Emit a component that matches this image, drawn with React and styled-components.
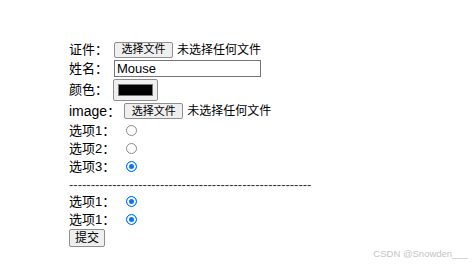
import React from "react";
import styled, { createGlobalStyle } from "styled-components";

const Global = createGlobalStyle`
  html, body { margin: 0; padding: 0; background: #fff; }
  body { font-family: "Liberation Sans", "Noto Sans CJK SC", sans-serif; color: #000; }
`;

const Page = styled.div`
  position: relative;
  width: 474px;
  height: 267px;
  overflow: hidden;
  box-sizing: border-box;
  padding: 40px 0 0 69px;
  font-size: 13px;
`;

const Row = styled.div`
  display: flex;
  align-items: center;
  height: ${(p) => p.$h}px;
  white-space: nowrap;
`;

const Label = styled.span`
  line-height: 1;
`;

const FileButton = styled.span`
  display: inline-flex;
  align-items: center;
  justify-content: center;
  box-sizing: border-box;
  width: 59px;
  height: 16px;
  margin-left: ${(p) => p.$ml}px;
  background: #efefef;
  border: 1px solid #8f8f8f;
  border-radius: 2px;
  font-size: 11px;
  line-height: 1;
`;

const FileStatus = styled.span`
  margin-left: 4px;
  font-size: 12px;
  line-height: 1;
`;

const TextInput = styled.input`
  box-sizing: border-box;
  width: 147px;
  height: 17px;
  margin: 0 0 0 6px;
  padding: 0 2px;
  border: 1px solid #767676;
  border-radius: 0;
  font-family: "Liberation Sans", "Noto Sans CJK SC", sans-serif;
  font-size: 13px;
  color: #000;
  outline: none;
`;

const ColorBox = styled.span`
  display: inline-flex;
  align-items: center;
  justify-content: center;
  box-sizing: border-box;
  width: 45px;
  height: 22px;
  margin-left: 5px;
  background: #efefef;
  border: 1px solid #8f8f8f;
  border-radius: 2px;
`;

const Swatch = styled.span`
  display: block;
  box-sizing: border-box;
  width: 35px;
  height: 12px;
  background: ${(p) => p.$color};
  border: 1px solid #777;
`;

const Radio = styled.span`
  display: inline-block;
  box-sizing: border-box;
  width: 11px;
  height: 11px;
  margin-left: 11px;
  border-radius: 50%;
  border: 1px solid ${(p) => (p.$checked ? "#0075ff" : "#8a8a8a")};
  background: ${(p) => (p.$checked ? "#0075ff" : "#fff")};
  box-shadow: ${(p) => (p.$checked ? "inset 0 0 0 2px #fff" : "none")};
`;

const Dashes = styled.div`
  display: flex;
  align-items: center;
  height: ${(p) => p.$h}px;
  color: #333;
  font-size: 13px;
  white-space: nowrap;
  line-height: 1;
`;

const Submit = styled.span`
  display: inline-flex;
  align-items: center;
  justify-content: center;
  box-sizing: border-box;
  width: 36px;
  height: 18px;
  margin-top: 1px;
  background: #efefef;
  border: 1px solid #8f8f8f;
  border-radius: 2px;
  font-size: 12px;
  line-height: 1;
`;

const Watermark = styled.span`
  position: absolute;
  right: 6px;
  bottom: 8px;
  font-size: 9.5px;
  color: #c4c4c4;
  font-family: "Liberation Sans", sans-serif;
`;

const Latin = styled.span`
  font-size: 14px;
`;

export default function App() {
  return (
    <>
      <Global />
      <Page>
        <Row $h={19}>
          <Label>证件：</Label>
          <FileButton $ml={6}>选择文件</FileButton>
          <FileStatus>未选择任何文件</FileStatus>
        </Row>
        <Row $h={19}>
          <Label>姓名：</Label>
          <TextInput readOnly value="Mouse" />
        </Row>
        <Row $h={23}>
          <Label>颜色：</Label>
          <ColorBox>
            <Swatch $color="#000" />
          </ColorBox>
        </Row>
        <Row $h={20}>
          <Label>
            <Latin>image</Latin>：
          </Label>
          <FileButton $ml={4}>选择文件</FileButton>
          <FileStatus>未选择任何文件</FileStatus>
        </Row>
        <Row $h={18}>
          <Label>选项1：</Label>
          <Radio />
        </Row>
        <Row $h={18}>
          <Label>选项2：</Label>
          <Radio />
        </Row>
        <Row $h={19}>
          <Label>选项3：</Label>
          <Radio $checked />
        </Row>
        <Dashes $h={16}>{"-".repeat(56)}</Dashes>
        <Row $h={18}>
          <Label>选项1：</Label>
          <Radio $checked />
        </Row>
        <Row $h={18}>
          <Label>选项1：</Label>
          <Radio $checked />
        </Row>
        <Submit>提交</Submit>
        <Watermark>CSDN @Snowden___</Watermark>
      </Page>
    </>
  );
}
